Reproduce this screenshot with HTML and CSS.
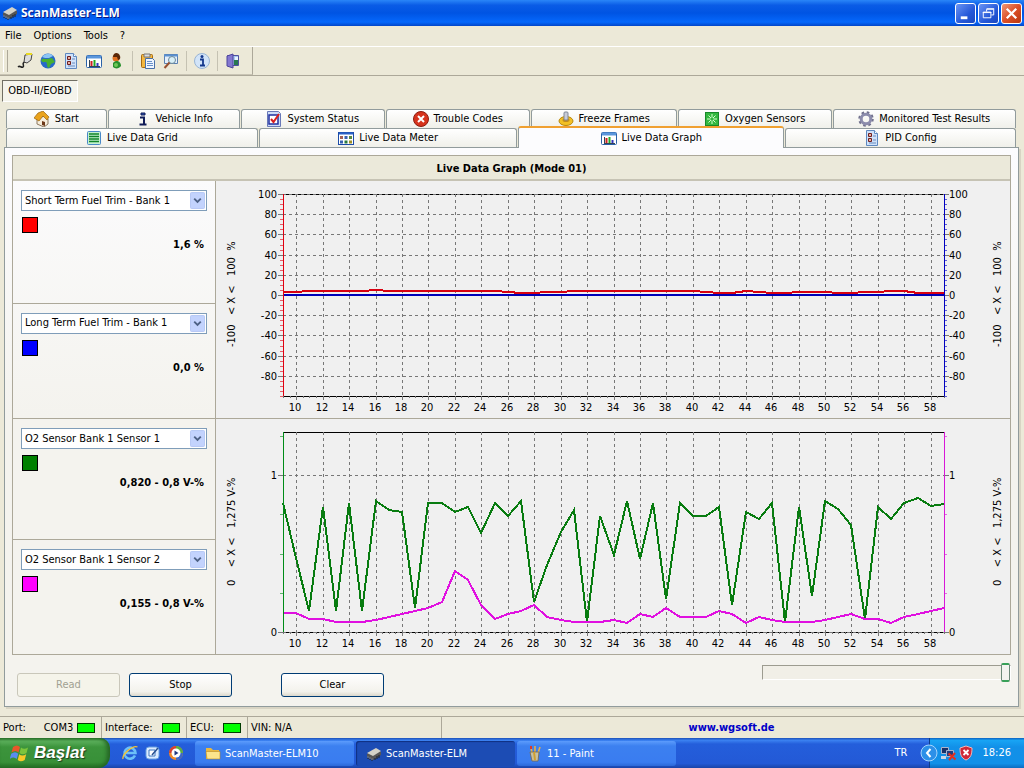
FILE: index.html
```
<!DOCTYPE html>
<html lang="en">

<head>
    <meta charset="UTF-8">
    <meta name="viewport" content="width=device-width, initial-scale=1.0">
    <title>ScanMaster-ELM</title>
    <link rel="stylesheet" href="styles.css">
</head>
<body>
    <!-- Shared icons -->
    <svg class="sprite" aria-hidden="true">
        <symbol id="i-chip" viewBox="0 0 16 16">
            <path d="M1 8l9-5 5 3v3l-8 5-6-4z" fill="#555"/>
            <path d="M1 7l9-5 5 3-8 5z" fill="#d4d2c8"/>
            <path d="M2 10v3m2-2v3m2-2v3m3-3v2m2-4v3m2-4v3" stroke="#222"/>
            <path d="M2 10v2m2-1v2m2-1v2" stroke="#eee" stroke-width=".5"/>
        </symbol>
        <symbol id="i-graph" viewBox="0 0 16 16">
            <rect x=".5" y="2.5" width="15" height="12" rx="1" fill="#fff" stroke="#2a62a8"/>
            <path d="M1 4h14" stroke="#5a96dc" stroke-width="3"/>
            <path d="M3 13.500h11M3.500 7v6" stroke="#345" />
            <path d="M5.500 8v5" stroke="#c22" stroke-width="2"/>
            <path d="M8.500 7v6" stroke="#2a2" stroke-width="2"/>
            <path d="M11.500 10v3" stroke="#33b" stroke-width="2"/>
        </symbol>
        <symbol id="i-config" viewBox="0 0 16 16">
            <path d="M2.500.5h8l3 3v12h-11z" fill="#cfe2fa" stroke="#5e88c0"/>
            <path d="M10.500.5v3h3" fill="#fff" stroke="#5e88c0"/>
            <path d="M4.500 3.500h3v3h-3zM4.500 8.500h3v3h-3z" fill="#e8b0a0" stroke="#702020"/>
            <path d="M9 6h3M9 10h3M5 13h7" stroke="#6a8cc0"/>
        </symbol>
        <symbol id="i-arrow" viewBox="0 0 16 18">
            <rect x=".5" y=".5" width="15" height="17" rx="1" fill="#c3d3fd" stroke="#b4c6f4"/>
            <path d="M4.500 7l3.500 3.500L11.500 7" fill="none" stroke="#4d6185" stroke-width="2"/>
        </symbol>
    </svg>

    <header class="titlebar">
        <svg class="icon"><use href="#i-chip"/></svg>
        <h1>ScanMaster-ELM</h1>
        <button class="winbtn" aria-label="Minimize"><svg viewBox="0 0 20 20"><path d="M5 14.500h7" stroke="#fff" stroke-width="3"/></svg></button>
        <button class="winbtn" aria-label="Restore"><svg viewBox="0 0 20 20" fill="none" stroke="#fff"><path d="M8 8V5.500h7.500v6H13M8 5h8" /><path d="M4.500 8.500h8v6h-8zM4 9h9"/></svg></button>
        <button class="winbtn close" aria-label="Close"><svg viewBox="0 0 20 20"><path d="M5 5l10 10M15 5L5 15" stroke="#fff" stroke-width="2.400"/></svg></button>
    </header>

    <nav class="menubar">
        <button>File</button>
        <button>Options</button>
        <button>Tools</button>
        <button>?</button>
    </nav>

    <div class="toolbar-area">
        <div class="toolbar">
            <span class="grip"></span>
            <button aria-label="Connect"><svg class="icon" viewBox="0 0 16 16"><path d="M1 14c2-2 3 1 5 0s-2-4 2-5" fill="none" stroke="#222" stroke-width="1.500"/><path d="M8 2l7-1-1 6-4 3-3-1z" fill="#ddd" stroke="#444"/><path d="M9 1h6" stroke="#e8d820" stroke-width="2"/></svg></button>
            <button aria-label="Internet"><svg class="icon" viewBox="0 0 16 16"><circle cx="8" cy="8" r="7.500" fill="#2869c8"/><path d="M2 4c3-4 9-4 11-1L9 5 5 5z" fill="#8bc4f4"/><path d="M1 7c2-2 4-1 6-1l5-1 3 4-4 2-2 4c-3-1-1-4-3-6-2 0-4 1-5-2z" fill="#48b030"/></svg></button>
            <button aria-label="Configuration"><svg class="icon"><use href="#i-config"/></svg></button>
            <button aria-label="Graph"><svg class="icon"><use href="#i-graph"/></svg></button>
            <button aria-label="User"><svg class="icon" viewBox="0 0 16 16"><circle cx="7" cy="5" r="3.500" fill="#e07020"/><path d="M4 4c0-5 6-5 7-1 1 3-1 4-2 4l-1-3z" fill="#5a2808"/><path d="M4 10c4-4 8-1 8 3-2 3-6 3-8 1z" fill="#28902c"/><circle cx="7" cy="12" r="2" fill="#70c858"/></svg></button>
            <span class="sep"></span>
            <button aria-label="Paste"><svg class="icon" viewBox="0 0 16 16"><rect x="1.500" y="1.500" width="11" height="13" rx="1" fill="#f4b840" stroke="#a86c10"/><path d="M4 1h6v3H4z" fill="#ddd" stroke="#777"/><path d="M5.500 5.500h7l2 2v8h-9z" fill="#eef5ff" stroke="#4870a8"/><path d="M7 8.500h5m-5 2h6m-6 2h6" stroke="#6890c8"/></svg></button>
            <button aria-label="Preview"><svg class="icon" viewBox="0 0 16 16"><path d="M1.500 1.500h13v9h-13z" fill="#e4effc" stroke="#5a80b0"/><path d="M1 2.500h14" stroke="#5a90d0" stroke-width="2"/><circle cx="9" cy="7" r="3.500" fill="#d8f0f8" stroke="#6c8898"/><path d="M6.500 9.500L1.500 15" stroke="#985030" stroke-width="2"/></svg></button>
            <span class="sep"></span>
            <button aria-label="Information"><svg class="icon" viewBox="0 0 16 16"><circle cx="8" cy="8" r="7.500" fill="#d2e4f8" stroke="#98b4d4"/><path d="M6 6.500h3V12M6 12.500h5" fill="none" stroke="#14388c" stroke-width="1.800"/><circle cx="8" cy="3.600" r="1.500" fill="#14388c"/></svg></button>
            <span class="sep"></span>
            <button aria-label="Exit"><svg class="icon" viewBox="0 0 16 16"><path d="M2.500 2.500h11v10h-11z" fill="#a8c8f0" stroke="#5050a0"/><path d="M2 3l6-2v14l-6-2z" fill="#8478d0" stroke="#4c449c"/><path d="M9 7h4v5H9z" fill="#287850"/><path d="M10 4h3v3h-3z" fill="#e8f4ff"/></svg></button>
        </div>
    </div>

    <div class="protocol"><button>OBD-II/EOBD</button></div>

    <main>
        <div class="tabs upper" role="tablist">
            <button role="tab" class="tab t-start"><svg class="icon" viewBox="0 0 16 16"><path d="M3 8v5l7 3 4-3V8l-4-3z" fill="#f6eddc" stroke="#8c7860"/><path d="M0 7l4-5 5-2 6 6-2 3-4-4-4 5z" fill="#eaa31c" stroke="#97630e" stroke-width=".7"/><path d="M8 10l3 1v4l-3-1z" fill="#6c3818"/></svg>Start</button>
            <button role="tab" class="tab t-vehicle"><svg class="icon" viewBox="0 0 16 16"><path d="M5 6.500h4V13M4.500 13.500h7" fill="none" stroke="#101c58" stroke-width="2"/><path d="M6 2h4v2H6z" fill="#2c50b0" stroke="#101c58"/></svg>Vehicle Info</button>
            <button role="tab" class="tab t-status"><svg class="icon" viewBox="0 0 16 16"><path d="M1.500.5h11l2 2v13h-13z" fill="#cddcf8" stroke="#6878b8"/><path d="M3 4h9v9H3z" fill="#fff" stroke="#2030a0" stroke-width="1.500"/><path d="M5 8l2.500 3L13 3" fill="none" stroke="#d82020" stroke-width="2"/></svg>System Status</button>
            <button role="tab" class="tab t-trouble"><svg class="icon" viewBox="0 0 16 16"><circle cx="8" cy="8" r="7.500" fill="#d6331c" stroke="#8c1c10"/><path d="M5 5l6 6M11 5l-6 6" stroke="#fff" stroke-width="2"/></svg>Trouble Codes</button>
            <button role="tab" class="tab t-freeze"><svg class="icon" viewBox="0 0 16 16"><ellipse cx="8" cy="10" rx="7" ry="4.500" fill="#f2c024" stroke="#b8860c"/><ellipse cx="8" cy="9" rx="3.500" ry="2" fill="#c08c20"/><rect x="6" y="1" width="4" height="8" rx="1" fill="#c8ccd8" stroke="#808898"/></svg>Freeze Frames</button>
            <button role="tab" class="tab t-oxygen"><svg class="icon" viewBox="0 0 16 16"><rect x="1.500" y="1.500" width="13" height="13" fill="#34b840" stroke="#18882a"/><path d="M8 3v10M3 8h10M4.500 4.500l7 7M11.500 4.500l-7 7" stroke="#d8ffd0"/><circle cx="8" cy="8" r="1.500" fill="#34b840"/></svg>Oxygen Sensors</button>
            <button role="tab" class="tab t-monitored"><svg class="icon" viewBox="0 0 16 16"><circle cx="8" cy="8" r="6.500" fill="none" stroke="#70708c" stroke-width="2.500" stroke-dasharray="2.500 2.600"/><circle cx="8" cy="8" r="4.800" fill="none" stroke="#8c8cac" stroke-width="3"/></svg>Monitored Test Results</button>
        </div>
        <div class="tabs lower" role="tablist">
            <button role="tab" class="tab t-grid"><svg class="icon" viewBox="0 0 16 16"><rect x="1.500" y="1.500" width="13" height="13" rx="1" fill="#c4f0d0" stroke="#4888c8"/><path d="M3 4h10M3 6.500h10M3 9h10M3 11.500h10" stroke="#108428" stroke-width="1.400"/></svg>Live Data Grid</button>
            <button role="tab" class="tab t-meter"><svg class="icon" viewBox="0 0 16 16"><rect x=".5" y="2.500" width="15" height="12" fill="#fff" stroke="#1c4ca8"/><path d="M1 3.500h14" stroke="#2860c8" stroke-width="2"/><path d="M2 6h3v3H2z" fill="#a06058"/><path d="M6.500 6h3v3h-3zM2 10.500h3v3H2z" fill="#3860b0"/><path d="M11 6h3v3h-3z" fill="#588840"/><path d="M6.500 10.500h3v3h-3z" fill="#287840"/><path d="M11 10.500h3v3h-3z" fill="#a09028"/></svg>Live Data Meter</button>
            <button role="tab" class="tab t-graph active" aria-selected="true"><svg class="icon"><use href="#i-graph"/></svg>Live Data Graph</button>
            <button role="tab" class="tab t-pid"><svg class="icon"><use href="#i-config"/></svg>PID Config</button>
        </div>

        <section class="page">
            <div class="panel">
                <h2>Live Data Graph (Mode 01)</h2>
                <div class="monitor">
                    <div class="channel">
                        <div class="combo">
                            <select aria-label="Channel 1"><option>Short Term Fuel Trim - Bank 1</option></select>
                            <svg><use href="#i-arrow"/></svg>
                        </div>
                        <span class="swatch red"></span>
                        <output>1,6 %</output>
                    </div>
                    <div class="channel">
                        <div class="combo">
                            <select aria-label="Channel 2"><option>Long Term Fuel Trim - Bank 1</option></select>
                            <svg><use href="#i-arrow"/></svg>
                        </div>
                        <span class="swatch blue"></span>
                        <output>0,0 %</output>
                    </div>
                    <div class="channel">
                        <div class="combo">
                            <select aria-label="Channel 3"><option>O2 Sensor Bank 1 Sensor 1</option></select>
                            <svg><use href="#i-arrow"/></svg>
                        </div>
                        <span class="swatch green"></span>
                        <output>0,820 - 0,8 V-%</output>
                    </div>
                    <div class="channel">
                        <div class="combo">
                            <select aria-label="Channel 4"><option>O2 Sensor Bank 1 Sensor 2</option></select>
                            <svg><use href="#i-arrow"/></svg>
                        </div>
                        <span class="swatch magenta"></span>
                        <output>0,155 - 0,8 V-%</output>
                    </div>
                    <div class="chart top"><svg id="fuelChart"></svg></div>
                    <div class="chart bottom"><svg id="sensorChart"></svg></div>
                </div>
            </div>
            <div class="actions">
                <button disabled>Read</button>
                <button>Stop</button>
                <button class="clear">Clear</button>
                <input type="range" min="0" max="100" value="100" aria-label="Time position">
            </div>
        </section>
    </main>

    <footer class="statusbar">
        <div class="cell port"><span>Port:</span><span>COM3</span><i class="led"></i></div>
        <div class="cell interface"><span>Interface:</span><i class="led"></i></div>
        <div class="cell ecu"><span>ECU:</span><i class="led"></i></div>
        <div class="cell vin">VIN: N/A</div>
        <div class="cell site"><a href="#">www.wgsoft.de</a></div>
    </footer>

    <div class="taskbar">
        <button class="start"><svg viewBox="0 0 20 20"><path d="M3 4q4-3 7 0L8.500 9.500q-3-3-7 0z" fill="#e8562a"/><path d="M11 4.500q3 2.500 7 0L16.500 10q-4 2.500-7 0z" fill="#7cc43c"/><path d="M1.200 10.700q4-3 7 0L6.700 16q-3-3-7 0z" fill="#5a8cf0"/><path d="M9.200 11.200q3 2.500 7 0L14.700 17q-4 2.500-7 0z" fill="#f8c828"/></svg>Başlat</button>
        <div class="quick">
            <button aria-label="Internet Explorer"><svg class="icon" viewBox="0 0 16 16"><path d="M13 10.500A5.500 5.500 0 1 1 13.500 8H4" fill="none" stroke="#6cc0f8" stroke-width="2.600"/><path d="M1 14C0 9 11 0 15.500 2" fill="none" stroke="#f4c438" stroke-width="1.300"/></svg></button>
            <button aria-label="Show desktop"><svg class="icon" viewBox="0 0 16 16"><rect x="1" y="2" width="13" height="12" rx="3" fill="#dcecff" stroke="#68a0e0"/><path d="M4 5h6v6H4z" fill="#fff" stroke="#3c78c0"/><path d="M7 10l6-7" stroke="#285090" stroke-width="1.500"/></svg></button>
            <button aria-label="Media player"><svg class="icon" viewBox="0 0 16 16"><circle cx="8" cy="8" r="7" fill="#f08828"/><path d="M8 8V1a7 7 0 0 1 7 7z" fill="#58b040"/><path d="M8 8H1a7 7 0 0 1 7-7z" fill="#d84030"/><path d="M8 15a7 7 0 0 0 7-7H8z" fill="#3c68c8"/><circle cx="8" cy="8" r="4.500" fill="#fff"/><path d="M6.500 5.500l4 2.500-4 2.500z" fill="#203880"/></svg></button>
        </div>
        <button class="task"><svg class="icon" viewBox="0 0 16 16"><path d="M1 2h5l2 2h6v9H1z" fill="#e8b840"/><path d="M1 5.500h14V13H2z" fill="#fce48c" stroke="#b88820" stroke-width=".6"/></svg>ScanMaster-ELM10</button>
        <button class="task current"><svg class="icon"><use href="#i-chip"/></svg>ScanMaster-ELM</button>
        <button class="task"><svg class="icon" viewBox="0 0 16 16"><path d="M5 7L4 1m4 5V0m3 7l2-6" stroke="#e8b048" stroke-width="1.600"/><path d="M4 3V0" stroke="#d83830" stroke-width="2"/><path d="M3 6h9l-1 9H5z" fill="#c8c0a0" stroke="#786848" stroke-width=".8"/><path d="M7 6l1 8" stroke="#d0a030" stroke-width="2"/></svg>11 - Paint</button>
        <span class="lang">TR</span>
        <div class="tray">
            <button class="expand" aria-label="Show hidden icons"><svg viewBox="0 0 18 18"><circle cx="9" cy="9" r="8" fill="#2c90e8" stroke="#a4d4fc"/><path d="M10.500 5L7 9l3.500 4" fill="none" stroke="#fff" stroke-width="2"/></svg></button>
            <svg class="icon" viewBox="0 0 16 16"><path d="M1.500 2.500h7v6h-7z" fill="#183068" stroke="#aab4cc"/><path d="M6.500 5.500h7v6h-7z" fill="#203c80" stroke="#aab4cc"/><path d="M1 11h5v3H1z" fill="#ccd4e4"/><path d="M8.500 8.500l7 6M15 8l-6 7" stroke="#e03020" stroke-width="2"/></svg>
            <svg class="icon" viewBox="0 0 16 16"><path d="M8 1l6 2c0 6-1 10-6 12C3 13 2 9 2 3z" fill="#d02838" stroke="#f0b8b8"/><path d="M5.500 5l5 5M10.500 5l-5 5" stroke="#fff" stroke-width="1.800"/></svg>
            <time>18:26</time>
        </div>
    </div>

    <script src="chart.js"></script>
</body>
</html>
```
FILE: chart.js
```
const SVG_NS = 'http://www.w3.org/2000/svg';
const FIRST = 9;
const LAST = 59;

// One sample per second, from FIRST to LAST
const shortTrim = [3, 3, 4, 4, 4, 4, 4, 5, 4, 4, 4, 4, 4, 4, 4, 4, 4, 3, 2, 2, 3, 3, 4, 4, 4, 4, 4, 4, 4, 4, 4, 4,
    3, 2, 2, 4, 3, 2, 2, 3, 3, 3, 2, 2, 3, 3, 4, 4, 2, 2, 2];
const longTrim = shortTrim.map(() => 0);
const sensor1 = [.82, .47, .137, .8, .137, .82, .137, .835, .78, .767, .154, .823, .823, .767, .8, .628, .82, .737,
    .833, .19, .425, .64, .78, .066, .737, .49, .835, .468, .82, .21, .82, .74, .74, .8, .173, .763, .72, .82, .066,
    .8, .23, .835, .784, .68, .083, .8, .72, .82, .853, .803, .818];
const sensor2 = [.118, .118, .08, .08, .062, .062, .062, .077, .096, .115, .135, .154, .19, .387, .333, .173, .08,
    .115, .135, .173, .096, .077, .062, .062, .062, .075, .06, .115, .098, .154, .098, .098, .098, .135, .115, .06,
    .094, .077, .062, .062, .062, .077, .096, .115, .08, .08, .06, .096, .115, .135, .152];

const charts = [
    {
        svg: document.getElementById('fuelChart'),
        min: -100, max: 100, minor: 5,
        labels: [100, 80, 60, 40, 20, 0, -20, -40, -60, -80],
        caption: '-100   < X <   100  %', captionEnd: 166,
        series: [{ color: '#0000b8', data: longTrim }, { color: '#d80010', data: shortTrim }],
        leftColor: '#e00010', rightColor: '#0000c0'
    },
    {
        svg: document.getElementById('sensorChart'),
        min: 0, max: 1.275, minor: .25,
        labels: [1, 0],
        caption: '0    < X <   1,275 V-%', captionEnd: 167,
        series: [{ color: '#087c10', data: sensor1 }, { color: '#e010e0', data: sensor2 }],
        leftColor: '#008c18', rightColor: '#d818d8'
    }
];

function add(svg, name, attrs, text) {
    const el = document.createElementNS(SVG_NS, name);
    for (const key in attrs) el.setAttribute(key, attrs[key]);
    if (text !== undefined) el.textContent = text;
    svg.appendChild(el);
}

function line(svg, x1, y1, x2, y2, stroke, cls) {
    add(svg, 'line', { x1, y1, x2, y2, stroke, class: cls || '' });
}

function draw(chart) {
    const svg = chart.svg;
    const width = svg.clientWidth;
    const height = svg.clientHeight;
    const left = 67, right = width - 66, top = 13, bottom = height - 22;
    const px = t => Math.round(left + (t - FIRST) / (LAST - FIRST) * (right - left));
    const py = v => Math.round(bottom - (v - chart.min) / (chart.max - chart.min) * (bottom - top));

    svg.replaceChildren();

    line(svg, left, top, right, top, '#000');
    line(svg, left, bottom, right, bottom, '#000');

    // Time axis
    for (let t = FIRST; t <= LAST; t += .5) {
        line(svg, px(t), bottom, px(t), bottom + 2, '#777');
    }
    for (let t = FIRST + 1; t < LAST; t += 2) {
        line(svg, px(t), top, px(t), bottom, '#777', 'grid');
        line(svg, px(t), bottom, px(t), bottom + 4, '#777');
        add(svg, 'text', { x: px(t) - 1, y: bottom + 15, 'text-anchor': 'middle' }, t);
    }

    // Value axes
    for (let v = chart.min; v <= chart.max; v += chart.minor) {
        line(svg, left - 3, py(v), left, py(v), chart.leftColor, 'minor');
        line(svg, right, py(v), right + 3, py(v), chart.rightColor, 'minor');
    }
    chart.labels.forEach(v => {
        line(svg, left, py(v), right, py(v), '#777', 'grid');
        line(svg, left - 5, py(v), left, py(v), '#777');
        line(svg, right, py(v), right + 5, py(v), '#777');
        add(svg, 'text', { x: left - 6, y: py(v) + 4, 'text-anchor': 'end' }, v);
        add(svg, 'text', { x: right + 5, y: py(v) + 4 }, v);
    });

    chart.series.forEach(s => {
        const points = s.data.map((v, i) => px(FIRST + i) + ',' + py(v)).join(' ');
        add(svg, 'polyline', { points, stroke: s.color });
    });

    line(svg, left, top, left, bottom, chart.leftColor);
    line(svg, right, top, right, bottom, chart.rightColor);

    [19, width - 9].forEach(x => {
        add(svg, 'text', { class: 'caption', transform: `translate(${x} ${chart.captionEnd}) rotate(-90)` }, chart.caption);
    });
}

function drawAll() {
    charts.forEach(draw);
}

window.addEventListener('resize', drawAll);
drawAll();
```
FILE: styles.css
```
* {
    box-sizing: border-box;
}

body {
    margin: 0;
    min-height: 100vh;
    display: flex;
    flex-direction: column;
    background: #ece9d8;
    color: #000;
    font: 11px/14px "DejaVu Sans Condensed", Tahoma, sans-serif;
}

button, select, input {
    font: inherit;
    color: inherit;
}

button {
    padding: 0;
    border: none;
    background: none;
}

.sprite {
    display: none;
}

.icon {
    width: 16px;
    height: 16px;
    flex: none;
}

/* Title bar and menu */
.titlebar {
    height: 26px;
    padding: 0 2px;
    display: flex;
    align-items: center;
    gap: 2px;
    background: linear-gradient(#2a86f8, #0a5ce6 20%, #0054e3 50%, #0568fc 85%, #0346c8);
}

.titlebar h1 {
    flex: 1;
    margin: 0 1px;
    color: #fff;
    font: bold 12px/20px "Open Sans", sans-serif;
    text-shadow: 1px 1px #0a1883;
}

.winbtn {
    width: 21px;
    height: 21px;
    border: 1px solid #fff;
    border-radius: 3px;
    background: linear-gradient(135deg, #6a94f4, #2558d8 60%, #1a48c0);
}

.winbtn svg {
    display: block;
    width: 19px;
    height: 19px;
}

.close {
    background: linear-gradient(135deg, #f09878, #dc5028 50%, #b83810);
}

.menubar {
    height: 20px;
    padding: 0 5px 1px;
    display: flex;
    gap: 12px;
}

.toolbar-area {
    height: 30px;
    border-top: 1px solid #fff;
    border-bottom: 1px solid #aca899;
}

.toolbar {
    width: 253px;
    height: 28px;
    padding-left: 3px;
    display: flex;
    align-items: center;
    border-right: 1px solid #aca899;
    border-bottom: 1px solid #c8c4b4;
}

.toolbar button {
    width: 23px;
    height: 22px;
    display: grid;
    place-items: center;
}

.grip {
    width: 5px;
    height: 22px;
    margin-right: 5px;
    border-left: 1px solid #fff;
    border-right: 1px solid #aca899;
}

.sep {
    width: 1px;
    height: 20px;
    margin: 0 3px 0 4px;
    background: #c5c2b2;
}

.protocol {
    padding: 4px 2px 7px;
}

.protocol button {
    width: 76px;
    height: 22px;
    border: 1px solid;
    border-color: #716f64 #fff #fff #716f64;
    background: #f5f4ec;
}

/* Tabs */
main {
    flex: 1;
    display: flex;
    flex-direction: column;
    padding: 0 5px 9px 4px;
}

.tabs {
    display: flex;
    gap: 1px;
    height: 19px;
    padding: 0 3px 0 2px;
}

.tab {
    flex: 1 1 0;
    min-width: 0;
    display: flex;
    align-items: center;
    justify-content: center;
    gap: 5px;
    white-space: nowrap;
    border: 1px solid #919b9c;
    border-bottom: none;
    border-radius: 3px 3px 0 0;
    background: linear-gradient(#fff, #f0f0ea);
}

.t-start { flex-grow: 100; }
.t-vehicle { flex-grow: 132; }
.t-status { flex-grow: 144; }
.t-trouble { flex-grow: 144; }
.t-freeze { flex-grow: 146; }
.t-oxygen { flex-grow: 154; }
.t-monitored { flex-grow: 184; }
.t-grid { flex-grow: 252; }
.t-meter { flex-grow: 259; }
.t-graph { flex-grow: 266; }
.t-pid { flex-grow: 231; }

.tab.active {
    z-index: 1;
    height: 22px;
    margin-top: -2px;
    border-top: 2px solid #f0a030;
    background: #fcfcfe;
}

/* Tab page */
.page {
    flex: 1;
    display: flex;
    flex-direction: column;
    padding: 7px;
    border: 1px solid #919b9c;
    box-shadow: 2px 2px #d8d4c4;
    background: linear-gradient(#fcfcfe, #f4f3ee 48%);
}

.panel {
    flex: 1;
    display: flex;
    flex-direction: column;
    border: 1px solid #aca899;
}

.panel h2 {
    margin: 0;
    height: 25px;
    padding: 4px 0;
    border-bottom: 2px solid #c6c3b4;
    background: #ebe9da;
    font-size: 11px;
    line-height: 18px;
    text-align: center;
}

.monitor {
    flex: 1;
    display: grid;
    grid-template-columns: 203px 1fr;
    grid-template-rows: 122fr 116fr 121fr 115fr;
}

.channel {
    grid-column: 1;
    padding: 9px 8px 0;
    display: flex;
    flex-direction: column;
    border-right: 1px solid #aca899;
}

.channel + .channel {
    border-top: 1px solid #aca899;
}

.combo {
    position: relative;
}

.combo select {
    display: block;
    width: 100%;
    height: 21px;
    padding: 0 20px 0 3px;
    border: 1px solid #7f9db9;
    border-radius: 0;
    background: #fff;
    appearance: none;
}

.combo svg {
    position: absolute;
    top: 2px;
    right: 2px;
    width: 15px;
    height: 17px;
    pointer-events: none;
}

.swatch {
    width: 16px;
    height: 16px;
    margin: 6px 1px 5px;
    border: 1px solid #000;
}

.red { background: #f00; }
.blue { background: #00f; }
.green { background: #008000; }
.magenta { background: #f0f; }

.channel output {
    padding-right: 3px;
    font-weight: bold;
    text-align: right;
}

.chart {
    grid-column: 2;
    min-width: 0;
    background: #f0f0f0;
}

.chart.top {
    grid-row: 1 / 3;
}

.chart.bottom {
    grid-row: 3 / 5;
    border-top: 1px solid #aca899;
}

.chart svg {
    display: block;
    width: 100%;
    height: 100%;
}

.chart line, .chart polyline {
    shape-rendering: crispEdges;
}

.chart .grid {
    stroke-dasharray: 3 3;
}

.chart .minor {
    opacity: .6;
}

.chart polyline {
    fill: none;
    stroke-width: 2;
}

.caption {
    white-space: pre;
}

.actions {
    display: flex;
    gap: 9px;
    padding: 18px 0 2px 5px;
}

.actions button {
    width: 103px;
    height: 24px;
    border: 1px solid #003c74;
    border-radius: 3px;
    background: linear-gradient(#fff, #f3f2ec 80%, #dcd8cc);
}

.actions button:disabled {
    border-color: #c9c7ba;
    background: #f5f4ea;
    color: #a1a192;
}

.actions .clear {
    margin-left: 40px;
}

.actions input {
    width: 249px;
    height: 19px;
    margin: -10px 0 0 auto;
    appearance: none;
    background: none;
}

.actions input::-webkit-slider-runnable-track {
    height: 15px;
    border: 1px solid;
    border-color: #9d9c90 #fff #fff #9d9c90;
    background: #f1efe7;
}

.actions input::-webkit-slider-thumb {
    width: 9px;
    height: 19px;
    margin-top: -3px;
    appearance: none;
    border: 1px solid #6c8878;
    border-top: 2px solid #38a058;
    border-bottom: 2px solid #38a058;
    border-radius: 2px;
    background: #f3f3ef;
}

/* Status bar */
.statusbar {
    height: 22px;
    display: flex;
    border-top: 1px solid #aca899;
}

.cell {
    padding: 0 6px 0 3px;
    display: flex;
    align-items: center;
    justify-content: space-between;
    border-right: 1px solid #aca899;
}

.port { width: 102px; }
.port .led { margin-left: -14px; }
.interface { width: 85px; }
.ecu { width: 61px; }
.vin { width: 194px; }

.cell.site {
    flex: 1;
    justify-content: center;
    border-right: none;
}

.led {
    width: 18px;
    height: 10px;
    border: 1px solid #003c00;
    background: #0f0;
}

.site a {
    color: #0000c8;
    font-weight: bold;
    text-decoration: none;
}

/* Taskbar */
.taskbar {
    height: 30px;
    display: flex;
    align-items: stretch;
    gap: 2px;
    background: linear-gradient(#1c50b8, #3a80f0 8%, #245edb 20%, #2359d6 85%, #1a44a8);
    color: #fff;
}

.start {
    width: 110px;
    padding: 0 0 1px 10px;
    display: flex;
    align-items: center;
    gap: 4px;
    border-radius: 0 10px 12px 0;
    background: linear-gradient(#2c7a2c, #5cb05c 10%, #3c943c 30%, #389038 80%, #247024);
    box-shadow: inset -3px 0 4px #246424;
    color: #fff;
    font: italic bold 17px/24px "Liberation Sans", Arial, sans-serif;
    text-shadow: 1px 1px 1px #1c3c1c;
}

.start svg {
    width: 20px;
    height: 20px;
}

.quick {
    width: 81px;
    padding-left: 10px;
    display: flex;
    align-items: center;
    gap: 7px;
}

.quick .icon {
    display: block;
}

.task {
    flex: 0 1 159px;
    margin: 3px 0 2px;
    padding-left: 10px;
    display: flex;
    align-items: center;
    gap: 4px;
    border-radius: 3px;
    background: linear-gradient(#5c9cfc, #3c80f0 20%, #3a7cf0 85%, #2c68d8);
    white-space: nowrap;
}

.task.current {
    background: #1c4cb4;
    box-shadow: inset 1px 1px 1px #103080;
}

.lang {
    margin: auto 20px auto auto;
}

.tray {
    padding-right: 13px;
    display: flex;
    align-items: center;
    gap: 2px;
    border-left: 1px solid #0c3c8c;
    background: linear-gradient(#0c60c0, #18a4f4 8%, #1290e8 30%, #1190e8 85%, #0c6cc0);
}

.expand {
    margin-left: -10px;
}

.expand svg {
    display: block;
    width: 18px;
    height: 18px;
}

.tray time {
    margin-left: 6px;
}
```
